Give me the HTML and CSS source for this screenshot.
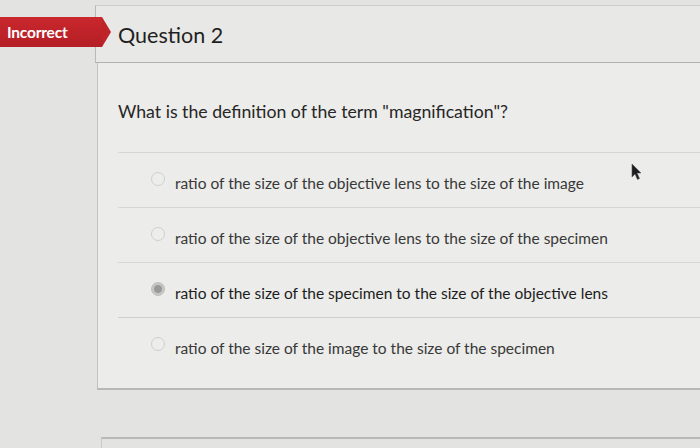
FILE: index.html
```html
<!DOCTYPE html>
<html>
<head>
<meta charset="utf-8">
<link rel="stylesheet" href="styles.css">
</head>
<body>
<div class="page">
  <div class="badge"><span>Incorrect</span></div>
  <div class="card">
    <div class="header"><h2>Question 2</h2></div>
    <div class="content">
      <p class="question">What is the definition of the term "magnification"?</p>
      <ul class="options">
        <li><span class="radio"></span><span class="label">ratio of the size of the objective lens to the size of the image</span></li>
        <li><span class="radio"></span><span class="label">ratio of the size of the objective lens to the size of the specimen</span></li>
        <li class="selected"><span class="radio"></span><span class="label">ratio of the size of the specimen to the size of the objective lens</span></li>
        <li><span class="radio"></span><span class="label">ratio of the size of the image to the size of the specimen</span></li>
      </ul>
    </div>
    <div class="next"></div>
  </div>
  <svg class="cursor" width="12" height="18" viewBox="0 0 12 18"><path d="M1 1 L1 14 L4 11 L6.5 16.5 L8.5 15.5 L6 10 L10 10 Z" fill="#1e1e22" stroke="#555" stroke-width="0.6"/></svg>
</div>
</body>
</html>
```
FILE: styles.css
```css
html, body {
  margin: 0;
  padding: 0;
}
body {
  width: 700px;
  height: 448px;
  overflow: hidden;
  background: #e3e3e1;
  font-family: Lato, "Open Sans", sans-serif;
}
.page {
  position: relative;
  padding-top: 5px;
  padding-left: 95px;
  height: 443px;
}
.card {
  display: flex;
  flex-direction: column;
}
.header {
  height: 56px;
  border-top: 1px solid #cdcdcb;
  border-left: 1px solid #b9b9b7;
  border-bottom: 1px solid #b2b2b0;
  background: #e8e8e6;
  display: flex;
  align-items: center;
  padding-left: 22px;
}
.header h2 {
  margin: 0;
  font-size: 21.5px;
  font-weight: 400;
  color: #1f1f1f;
  padding-top: 2px;
}
.content {
  margin-left: 2px;
  height: 325px;
  border-left: 1px solid #c2c2c0;
  border-bottom: 2px solid #b8b8b6;
  background: #ececea;
}
.question {
  margin: 0;
  padding: 39px 0 0 20px;
  height: 50px;
  font-size: 17.7px;
  line-height: 20px;
  color: #262626;
}
.options {
  list-style: none;
  margin: 0 0 0 20px;
  padding: 0;
}
.options li {
  height: 55px;
  border-top: 1px solid #d6d6d4;
  display: flex;
  align-items: flex-start;
  padding-top: 20px;
  box-sizing: border-box;
}
.options li:last-child {
  border-top-color: #d0d0ce;
}
.radio {
  width: 12px;
  height: 12px;
  border-radius: 50%;
  border: 1px solid #cfcfcd;
  background: #ededeb;
  margin: -1px 10px 0 33px;
  flex: none;
}
.label {
  font-size: 15.5px;
  line-height: 20px;
  color: #383838;
}
.selected .label {
  color: #1c1c1c;
}
.selected .radio {
  background: radial-gradient(circle, #999 0 3.5px, #c6c6c4 4.5px);
  border-color: #bdbdbb;
}
.next {
  margin-top: 47px;
  margin-left: 6px;
  height: 20px;
  border-top: 2px solid #b8b8b6;
  border-left: 1px solid #c8c8c6;
}
.badge {
  position: absolute;
  left: 0;
  top: 17px;
  width: 102px;
  height: 30px;
  background: linear-gradient(#c9282e, #b41e24);
  display: flex;
  align-items: center;
  padding-left: 7px;
  box-sizing: border-box;
  z-index: 2;
}
.badge::after {
  content: "";
  position: absolute;
  right: -9px;
  top: 0;
  border-top: 15px solid transparent;
  border-bottom: 15px solid transparent;
  border-left: 9px solid #be2329;
}
.badge span {
  color: #fff;
  font-weight: 700;
  font-size: 15.5px;
  letter-spacing: -0.2px;
  padding-bottom: 1px;
}
.cursor {
  position: absolute;
  left: 631px;
  top: 163px;
}
```
